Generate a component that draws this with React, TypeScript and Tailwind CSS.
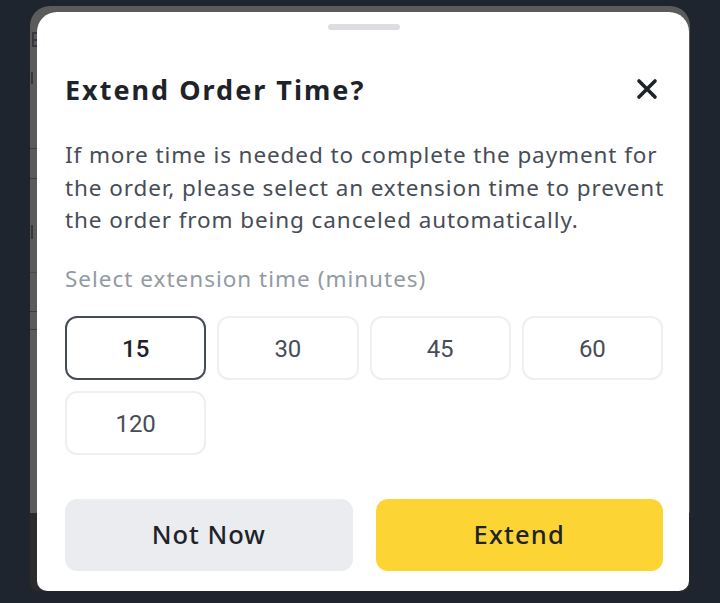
import React from "react";

const options = ["15", "30", "45", "60", "120"];

function Strip() {
  return (
    <div className="absolute left-0 top-0 w-[7px] h-[507px] overflow-hidden flex flex-col">
      <div className="mt-[26px] ml-[2px] flex flex-col gap-[4.5px] border-l-2 border-[#34373b]">
        <div className="w-[5px] h-[2px] bg-[#34373b]" />
        <div className="w-[5px] h-[2px] bg-[#34373b]" />
        <div className="w-[5px] h-[2px] bg-[#34373b]" />
      </div>
      <div className="mt-[25px] ml-px w-[2px] h-[12px] bg-[#34373b]" />
      <div className="mt-[64px] h-px bg-[#3a3c40]" />
      <div className="mt-[29px] h-px bg-[#3a3c40]" />
      <div className="mt-[46px] ml-px w-[2px] h-[14px] bg-[#34373b]" />
      <div className="mt-[33px] h-px bg-[#4a4c50]" />
      <div className="mt-[38px] h-px bg-[#3a3c40]" />
      <div className="mt-[17px] h-px bg-[#3a3c40]" />
    </div>
  );
}

export default function App() {
  const selected = "15";
  return (
    <div className="w-[720px] h-[603px] bg-[#1f252e] overflow-hidden pt-[6px] pl-[30px] pr-[30px]" style={{ fontFamily: '"Noto Sans", "Open Sans", sans-serif' }}>
      <div className="relative h-[585px] rounded-t-[20px] rounded-b-[8px] bg-[linear-gradient(to_bottom,#5b5b5b_507px,#2b2b2b_507px)] pt-[6px] pl-[7px] pr-px">
        <Strip />
        <div className="relative h-[579px] bg-white rounded-t-[20px] rounded-b-[10px] flex flex-col px-[28px] pr-[26px]">
          <div className="flex justify-center pt-[12px]">
            <div className="w-[72px] h-[6px] rounded-full bg-[#dcdde1]" />
          </div>
          <div className="flex items-center justify-between mt-[43px] h-[32px]">
            <h1 className="text-[27px] font-bold text-[#1e2329] tracking-[2px] leading-none">Extend Order Time?</h1>
            <svg width="22" height="22" viewBox="0 0 22 22" className="mr-[5px] mt-[-1px]">
              <path d="M3 3 L19 19 M19 3 L3 19" stroke="#1e2329" strokeWidth="3.6" strokeLinecap="round" />
            </svg>
          </div>
          <p className="mt-[34px] w-[610px] text-[22.5px] leading-[32.5px] tracking-[0.9px] text-[#474d57]">
            If more time is needed to complete the payment for the order, please select an extension time to prevent the order from being canceled automatically.
          </p>
          <div className="mt-[26px] text-[22.5px] leading-[32px] tracking-[1px] text-[#929aa5]">Select extension time (minutes)</div>
          <div className="mt-[21px] grid grid-cols-4 gap-x-[11px] gap-y-[11px]">
            {options.map((o) => (
              <div
                key={o}
                className={
                  o === selected
                    ? "h-[64px] rounded-[12px] border-2 border-[#474d57] flex items-center justify-center pt-[2px] text-[24px] font-medium text-[#1e2329]"
                    : "h-[64px] rounded-[12px] border-2 border-[#eeeff2] flex items-center justify-center pt-[2px] text-[24px] text-[#474d57]"
                }
                style={{ fontFamily: 'Roboto, "Noto Sans", sans-serif' }}
              >
                {o}
              </div>
            ))}
          </div>
          <div className="mt-[44px] grid grid-cols-2 gap-[23px]">
            <button className="h-[72px] rounded-[12px] bg-[#eaecef] text-[25.5px] tracking-[1px] font-medium text-[#1e2329]">Not Now</button>
            <button className="h-[72px] rounded-[12px] bg-[#fcd535] text-[25.5px] tracking-[1.2px] font-medium text-[#1e2329]">Extend</button>
          </div>
        </div>
      </div>
    </div>
  );
}
